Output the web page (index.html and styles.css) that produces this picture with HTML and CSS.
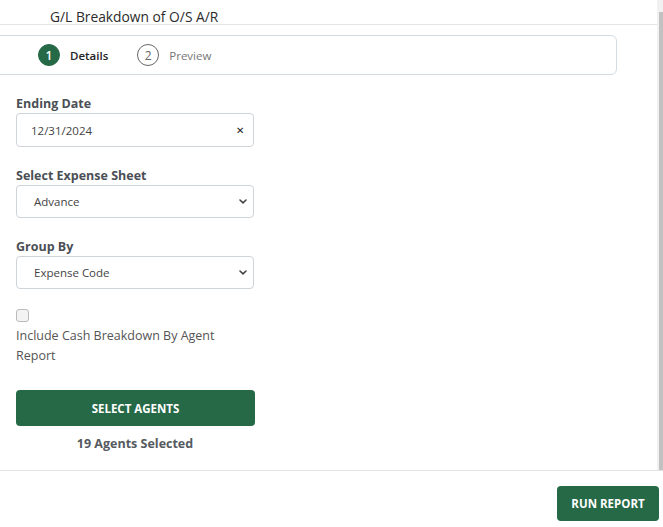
FILE: index.html
```html
<!DOCTYPE html>
<html>
<head>
<meta charset="utf-8">
<link rel="stylesheet" href="styles.css">
</head>
<body>
<div class="modal">
  <div class="scroll-area">
    <div class="content">
      <div class="header"><span class="title">G/L Breakdown of O/S A/R</span></div>
      <div class="stepper">
        <div class="step active"><span class="num">1</span><span class="step-label">Details</span></div>
        <div class="step"><span class="num">2</span><span class="step-label">Preview</span></div>
      </div>
      <div class="form">
        <div class="label first">Ending Date</div>
        <div class="input date"><span>12/31/2024</span><span class="clear">&#x2715;</span></div>
        <div class="label">Select Expense Sheet</div>
        <div class="input select"><span>Advance</span><svg class="chev" width="10" height="7" viewBox="0 0 10 7"><path d="M2 2 L5 4.8 L8 2" fill="none" stroke="#444" stroke-width="1.6" stroke-linecap="round" stroke-linejoin="round"/></svg></div>
        <div class="label">Group By</div>
        <div class="input select"><span>Expense Code</span><svg class="chev" width="10" height="7" viewBox="0 0 10 7"><path d="M2 2 L5 4.8 L8 2" fill="none" stroke="#444" stroke-width="1.6" stroke-linecap="round" stroke-linejoin="round"/></svg></div>
        <div class="checkbox"></div>
        <div class="check-text">Include Cash Breakdown By Agent Report</div>
        <div class="btn wide">SELECT AGENTS</div>
        <div class="selected">19 Agents Selected</div>
      </div>
    </div>
    <div class="scrollbar"><div class="arrow"></div><div class="thumb"></div></div>
  </div>
  <div class="footer"><div class="btn run">RUN REPORT</div></div>
</div>
</body>
</html>
```
FILE: styles.css
```css
html, body { margin: 0; padding: 0; }
body {
  width: 663px; height: 527px; overflow: hidden; background: #fff;
  font-family: "Open Sans", "Noto Sans", sans-serif; color: #333;
}
.modal { display: flex; flex-direction: column; height: 527px; }
.scroll-area { display: flex; height: 470px; border-bottom: 1px solid #e2e2e2; }
.content { width: 657px; overflow: hidden; }
.header { height: 25px; border-bottom: 1px solid #e6e6e6; box-sizing: border-box; padding-left: 50px; }
.title { display: block; font-size: 13.8px; line-height: 18px; padding-top: 8px; color: #2b2b2b; }
.stepper {
  margin-top: 10px; margin-left: -10px; width: 627px; height: 40px; box-sizing: border-box;
  border: 1px solid #d3dbe3; border-radius: 6px; display: flex; align-items: center; padding-left: 47px; gap: 29px;
}
.step { display: flex; align-items: center; gap: 10px; }
.num {
  width: 22px; height: 22px; box-sizing: border-box; border-radius: 50%; border: 1px solid #666;
  display: flex; align-items: center; justify-content: center; font-size: 12px; color: #666;
}
.step.active .num { background: #256947; border-color: #256947; color: #fff; font-weight: 600; }
.step-label { font-size: 11.5px; color: #777; }
.step.active .step-label { color: #222; font-weight: 600; }
.form { padding-left: 16px; width: 238px; }
.label { font-size: 12.5px; font-weight: 700; color: #4a4f55; line-height: 18px; margin-top: 20px; margin-bottom: 0; }
.label.first { margin-top: 20px; }
.input {
  height: 34px; box-sizing: border-box; border: 1px solid #cfd4d9; border-radius: 4px;
  display: flex; align-items: center; justify-content: space-between; font-size: 11.5px; color: #444;
}
.input.date { padding: 0 9px 0 14px; }
.input.select { height: 33px; padding: 0 5px 0 17px; }
.clear { font-size: 10px; color: #222; }
.checkbox {
  width: 13px; height: 13px; box-sizing: border-box; border: 1px solid #bbb; border-radius: 3px;
  background: #f3f3f3; margin-top: 20px;
}
.check-text { font-size: 12.5px; line-height: 20px; color: #555; margin-top: 4px; padding-right: 20px; }
.btn {
  background: #256947; color: #fff; font-weight: 700; font-size: 11.5px; border-radius: 4px;
  display: flex; align-items: center; justify-content: center;
}
.btn.wide { width: 239px; height: 36px; margin-top: 24px; }
.selected { text-align: center; font-size: 12.5px; font-weight: 700; color: #555a60; line-height: 18px; margin-top: 9px; }
.scrollbar { width: 6px; display: flex; flex-direction: column; background: #f1f1f1; }
.arrow { height: 12px; }
.thumb { flex: 1; margin-left: 2px; background: #c1c1c1; }
.footer { flex: 1; display: flex; justify-content: flex-end; align-items: flex-start; padding-right: 4px; }
.btn.run { width: 102px; height: 35px; margin-top: 15px; }
```
